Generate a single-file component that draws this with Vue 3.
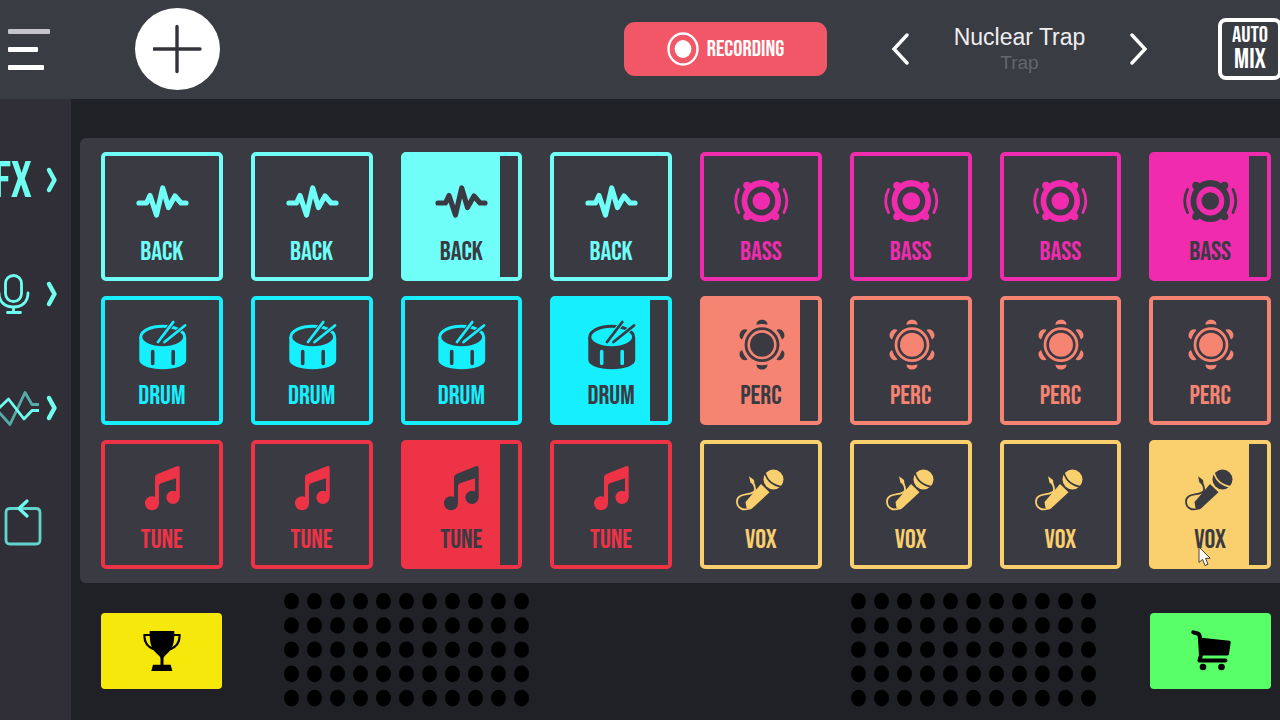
<script setup>
import { ref } from 'vue';

const groups = {
  back: { label: 'BACK', color: '#6ffff8' },
  bass: { label: 'BASS', color: '#f02bad' },
  drum: { label: 'DRUM', color: '#16effe' },
  perc: { label: 'PERC', color: '#f58472' },
  tune: { label: 'TUNE', color: '#ee3347' },
  vox: { label: 'VOX', color: '#facf6e' },
}

const rows = [
  { kinds: ['back', 'bass'], playing: [2, 7] },
  { kinds: ['drum', 'perc'], playing: [3, 4] },
  { kinds: ['tune', 'vox'], playing: [2, 7] },
]

const pads = ref(rows.flatMap((row, r) => Array.from({ length: 8 }, (_, i) => ({
  id: r * 8 + i,
  kind: row.kinds[i < 4 ? 0 : 1],
  playing: row.playing.includes(i),
}))))

const progress = ref(84)

const tools = [
  { id: 'fx', label: 'Effects', more: true },
  { id: 'mic', label: 'Microphone', more: true },
  { id: 'wave', label: 'Automation', more: true },
  { id: 'loop', label: 'Reset loop', more: false },
]

function toggle(pad) {
  pad.playing = !pad.playing
}
</script>

<template>
  <div class="app">
    <svg class="sprite" aria-hidden="true">
      <symbol id="icon-back" viewBox="0 0 60 60">
        <path
          d="M7 33H14.5L18 25.5L24.5 45L30.7 18L36.5 37.5L43 26L49 33H54"
          fill="none" stroke="currentColor" stroke-width="5.2" stroke-linecap="round" stroke-linejoin="round"
        />
      </symbol>
      <symbol id="icon-bass" viewBox="1 0 60 60">
        <g fill="currentColor">
          <circle cx="17" cy="15.5" r="3.8" />
          <circle cx="45.5" cy="15.5" r="3.8" />
          <circle cx="17" cy="46.5" r="3.8" />
          <circle cx="45.5" cy="46.5" r="3.8" />
          <ellipse cx="31.3" cy="31" rx="19.7" ry="21" />
        </g>
        <ellipse cx="31.3" cy="31" rx="14" ry="14.6" fill="var(--hole)" />
        <circle cx="31.3" cy="31" r="8.8" fill="currentColor" />
        <path
          d="M8.5 19.5Q2.8 31 8.5 42.5M54 19.5Q59.7 31 54 42.5"
          fill="none" stroke="currentColor" stroke-width="2.8" stroke-linecap="round"
        />
      </symbol>
      <symbol id="icon-drum" viewBox="1 0 60 60">
        <path d="M8.3 23V46C8.3 51.5 19 55.3 31.7 55.3S55.2 51.5 55.2 46V23Z" fill="currentColor" />
        <ellipse cx="31.7" cy="23" rx="21.9" ry="10.8" fill="var(--hole)" stroke="currentColor" stroke-width="3" />
        <path d="M21.7 37.5V49.5M42.2 37.5V49.5" stroke="var(--hole)" stroke-width="3.6" stroke-linecap="round" />
        <path d="M42.3 8L27 28M54 11.5L33.5 28" stroke="var(--hole)" stroke-width="4.6" />
        <path d="M42.3 8L27 28M54 11.5L33.5 28" stroke="currentColor" stroke-width="2.8" stroke-linecap="round" />
      </symbol>
      <symbol id="icon-perc" viewBox="1 0 60 60">
        <g fill="currentColor">
          <circle cx="32" cy="30.7" r="12" />
          <path
            v-for="turn in 6" :key="turn"
            d="M26.5 10.8C26.5 7.5 29 5.8 32 5.8S37.5 7.5 37.5 10.8Q32 9.4 26.5 10.8Z"
            :transform="`rotate(${turn * 60} 32 30.7)`"
          />
        </g>
        <circle cx="32" cy="30.7" r="16" fill="none" stroke="currentColor" stroke-width="2.8" />
      </symbol>
      <symbol id="icon-tune" viewBox="1 0 60 60">
        <g fill="currentColor">
          <circle cx="21" cy="45.3" r="7" />
          <circle cx="42" cy="39.3" r="6.6" />
          <path d="M24 45.5V20Q24 16.8 27 15.7L46.5 8.1Q48.7 7.5 48.7 10V39.5H45V20.3L30 25.3Q28 26 28 28V45.5Z" />
        </g>
      </symbol>
      <symbol id="icon-vox" viewBox="1 0 60 60">
        <circle cx="43.5" cy="21.5" r="10" fill="currentColor" />
        <path d="M35 14.5Q38 27 53 29" fill="none" stroke="var(--hole)" stroke-width="1.6" />
        <path d="M31 26L39.5 34.3L22 50.5Q19 52.5 16.5 50L15.5 44Z" fill="currentColor" />
        <path
          d="M19 50.5C13 53 7 50 7 43.5C7 34 22 38 24.7 33C26 30 24 26.5 22.5 24"
          fill="none" stroke="currentColor" stroke-width="1.8"
        />
        <path d="M19 18.3L24 22L24.7 28L20.5 24.5Z" fill="currentColor" />
      </symbol>
    </svg>

    <header class="topbar">
      <button class="plain menu" type="button" aria-label="Menu">
        <svg width="42" height="42" viewBox="0 0 42 42" aria-hidden="true">
          <rect y="1" width="42" height="5" rx="1" fill="#c5c4cb" />
          <rect y="19" width="30" height="5" rx="1" fill="#fff" />
          <rect y="37" width="36" height="5" rx="1" fill="#fff" />
        </svg>
      </button>
      <button class="plain add" type="button" aria-label="New project">
        <svg width="50" height="50" viewBox="0 0 50 50" aria-hidden="true">
          <path d="M24 2.5V47.5M1 25H47" stroke="#33343a" stroke-width="3.4" stroke-linecap="round" />
        </svg>
      </button>
      <button class="recording narrow" type="button">
        <svg width="32" height="34" viewBox="0 0 32 34" aria-hidden="true">
          <ellipse cx="16" cy="17" rx="14.5" ry="15.5" fill="none" stroke="#fff" stroke-width="2.4" />
          <ellipse cx="16" cy="17" rx="8.4" ry="9" fill="#fff" />
        </svg>
        RECORDING
      </button>
      <div class="picker">
        <button class="plain" type="button" aria-label="Previous pack">
          <svg width="18" height="32" viewBox="0 0 18 32" aria-hidden="true">
            <path d="M16 2L3 16L16 30" fill="none" stroke="#fff" stroke-width="3.4" stroke-linecap="round" />
          </svg>
        </button>
        <div class="pack">
          <div class="pack-name">Nuclear Trap</div>
          <div class="pack-genre">Trap</div>
        </div>
        <button class="plain" type="button" aria-label="Next pack">
          <svg width="18" height="32" viewBox="0 0 18 32" aria-hidden="true">
            <path d="M2 2L15 16L2 30" fill="none" stroke="#fff" stroke-width="3.4" stroke-linecap="round" />
          </svg>
        </button>
      </div>
      <button class="automix narrow" type="button">
        <span class="auto">AUTO</span>
        <span class="mix">MIX</span>
      </button>
    </header>

    <div class="body">
      <nav class="tools">
        <button v-for="tool in tools" :key="tool.id" class="plain tool" type="button" :aria-label="tool.label">
          <span class="tool-icon">
            <span v-if="tool.id === 'fx'" class="fx narrow">FX</span>
            <svg v-else-if="tool.id === 'mic'" width="42" height="48" viewBox="0 0 42 48" aria-hidden="true">
              <g fill="none" stroke="currentColor" stroke-width="2.8" stroke-linecap="round">
                <rect x="5.5" y="5.5" width="16" height="26" rx="8" />
                <path d="M-1 23C-1 32 5 37 13.5 37S28 32 28 23M13.5 37V41M7.5 42.5H20.5" />
              </g>
            </svg>
            <svg v-else-if="tool.id === 'wave'" width="42" height="48" viewBox="0 0 42 48" aria-hidden="true">
              <g fill="none" stroke="currentColor" stroke-width="2.8" stroke-linejoin="round">
                <path d="M-3 26L10 40.5L25 8.5L32 20.5H39" opacity=".6" />
                <path d="M-3 26L8.5 15L24 35L32 26.5H39" />
              </g>
            </svg>
            <svg v-else width="42" height="48" viewBox="0 0 42 48" aria-hidden="true">
              <g fill="none" stroke="currentColor" stroke-linecap="round" stroke-linejoin="round">
                <path d="M18 10.5H10Q6 10.5 6 14.5V42Q6 46 10 46H36Q40 46 40 42V14.5Q40 10.5 36 10.5H22" stroke-width="2.8" opacity=".8" />
                <path d="M27 3L19 10.5L27 18" stroke-width="3.2" />
              </g>
            </svg>
          </span>
          <svg v-if="tool.more" width="12" height="26" viewBox="0 0 12 26" aria-hidden="true">
            <path d="M3 3L8.5 13L3 23" fill="none" stroke="currentColor" stroke-width="4.4" stroke-linecap="round" stroke-linejoin="round" />
          </svg>
        </button>
      </nav>

      <main class="stage">
        <section class="board">
          <button
            v-for="pad in pads" :key="pad.id"
            type="button"
            class="pad narrow"
            :class="{ playing: pad.playing }"
            :style="{ '--tone': groups[pad.kind].color }"
            @click="toggle(pad)"
          >
            <span v-if="pad.playing" class="fill" :style="{ width: progress + '%' }"></span>
            <svg class="pad-icon" width="60" height="60" aria-hidden="true">
              <use :href="`#icon-${pad.kind}`" />
            </svg>
            <span class="pad-label">{{ groups[pad.kind].label }}</span>
            <svg v-if="pad.id === 23" class="pointer" width="14" height="21" viewBox="0 0 14 21" aria-hidden="true">
              <path d="M1 1V16.5L4.5 13.3L7 19.5L10 18.2L7.5 12.3H12.2Z" fill="#fff" stroke="#4a4030" stroke-width="1" />
            </svg>
          </button>
        </section>

        <footer class="deck">
          <button class="action trophy" type="button" aria-label="Achievements">
            <svg width="38" height="40" viewBox="0 0 38 40" aria-hidden="true">
              <path d="M6.7 0H31.3V3C31.3 15 28.5 19 21.7 25Q20.5 26 20.5 28V33.7H27.7L29.3 40H8.3L10 33.7H17.5V28Q17.5 26 16.3 25C9.5 19 6.7 15 6.7 3Z" />
              <path d="M7 4H1.5C1 10 4 15.5 11 18.5M31 4H36.5C37 10 34 15.5 27 18.5" fill="none" stroke="#000" stroke-width="2.2" />
            </svg>
          </button>
          <svg v-for="side in 2" :key="side" class="grille" width="245" height="114" viewBox="0 0 245 114" aria-hidden="true">
            <template v-for="row in 5" :key="row">
              <ellipse
                v-for="col in 11" :key="col"
                :cx="7.5 + (col - 1) * 23" :cy="8.3 + (row - 1) * 24.2"
                rx="7.5" ry="8.3"
              />
            </template>
          </svg>
          <button class="action cart" type="button" aria-label="Store">
            <svg width="40" height="42" viewBox="0 0 40 42" aria-hidden="true">
              <path d="M2.3 2.3L6.5 3.5Q8.5 4.2 8.8 7L10 25L8.5 30.5H34.5" fill="none" stroke="#000" stroke-width="4" stroke-linecap="round" stroke-linejoin="round" />
              <path d="M8 7.5L38.5 10.8Q40 11 39.7 12.5L38 24Q37.7 25.5 36 25.5H10Z" />
              <circle cx="12" cy="37" r="3.3" />
              <circle cx="30.5" cy="37" r="3.3" />
            </svg>
          </button>
        </footer>
      </main>
    </div>
  </div>
</template>

<style>
body {
  background-color: #202126;
}
</style>

<style scoped>
.app {
  display: flex;
  flex-direction: column;
  min-height: 100vh;
  overflow: hidden;
  background-color: #202126;
  font-family: "Liberation Sans", Arial, sans-serif;
}

.sprite {
  position: absolute;
  width: 0;
  height: 0;
}

button {
  box-sizing: border-box;
  margin: 0;
  cursor: pointer;
}

svg {
  display: block;
  flex: none;
}

.plain {
  padding: 0;
  border: 0;
  background: none;
  color: inherit;
}

.narrow {
  font-family: "Bebas Neue", "Liberation Sans Narrow", "Arial Narrow", sans-serif;
  font-weight: normal;
}

.topbar {
  display: flex;
  align-items: center;
  box-sizing: border-box;
  height: 99px;
  padding: 0 0 2px 8px;
  background-color: #3a3c43;
}

.add {
  display: flex;
  align-items: center;
  justify-content: center;
  width: 85px;
  height: 82px;
  margin-left: 85px;
  border-radius: 50%;
  background-color: #fff;
}

.recording {
  display: flex;
  align-items: center;
  justify-content: center;
  gap: 8px;
  width: 203px;
  height: 54px;
  margin-left: auto;
  border: 0;
  border-radius: 11px;
  background-color: #f25767;
  color: #fff;
  font-size: 23px;
}

.picker {
  display: flex;
  align-items: center;
  justify-content: space-between;
  width: 257px;
  margin: 0 70px 0 64px;
}

.pack {
  text-align: center;
}

.pack-name {
  color: #eeeef0;
  font-size: 23px;
  line-height: 28px;
}

.pack-genre {
  color: #64666d;
  font-size: 19px;
  line-height: 24px;
}

.automix {
  display: flex;
  flex-direction: column;
  align-items: center;
  justify-content: center;
  width: 64px;
  height: 62px;
  margin-right: -2px;
  padding: 0;
  border: 4px solid #fff;
  border-radius: 8px;
  background: none;
  color: #fff;
}

.auto {
  font-size: 23px;
  line-height: 23px;
}

.mix {
  font-size: 28px;
  line-height: 26px;
}

.body {
  display: flex;
  flex: 1;
}

.tools {
  flex: none;
  width: 71px;
  padding-top: 24px;
  box-sizing: border-box;
  background-color: #302f38;
  color: #6ffff0;
}

.tool {
  display: flex;
  align-items: center;
  gap: 4px;
  width: 100%;
  height: 114px;
}

.tool-icon {
  display: flex;
  justify-content: flex-end;
  width: 42px;
}

.fx {
  padding: 4px 10px 0 0;
  font-size: 52px;
  line-height: 48px;
}

.stage {
  flex: 1;
  min-width: 0;
  padding: 39px 0 0 9px;
}

.board {
  display: grid;
  grid-template-columns: repeat(8, 1fr);
  gap: 15px 28px;
  padding: 14px 9px 14px 21px;
  border-radius: 6px 0 0 6px;
  background-color: #3a3a43;
}

.pad {
  --hole: #3a3a43;
  position: relative;
  display: flex;
  flex-direction: column;
  align-items: center;
  min-width: 0;
  height: 129px;
  padding: 14px 0 0;
  border: 4px solid var(--tone);
  border-radius: 5px;
  background: none;
  color: var(--tone);
}

.pad.playing {
  --hole: var(--tone);
  color: #3a3a43;
}

.fill {
  position: absolute;
  top: 0;
  bottom: 0;
  left: 0;
  background-color: var(--tone);
}

.pad-icon,
.pad-label {
  position: relative;
}

.pad-label {
  margin-top: 8px;
  font-size: 27px;
  line-height: 28px;
}

.pointer {
  position: absolute;
  top: 102px;
  left: 45px;
}

.deck {
  display: flex;
  align-items: flex-start;
  padding: 10px 9px 14px 21px;
}

.action {
  display: flex;
  align-items: center;
  justify-content: center;
  width: 121px;
  height: 76px;
  margin-top: 20px;
  padding: 0;
  border: 0;
  border-radius: 4px;
}

.trophy {
  margin-right: 62px;
  background-color: #f7e80c;
}

.cart {
  margin-left: 54px;
  background-color: #59ff66;
}

.grille + .grille {
  margin-left: auto;
}
</style>
